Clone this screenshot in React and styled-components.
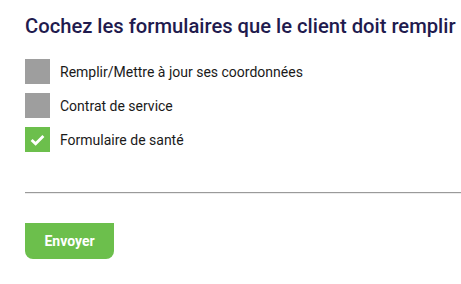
import React, { useState } from 'react';
import styled, { createGlobalStyle } from 'styled-components';

const Global = createGlobalStyle`
  body {
    margin: 0;
    background: #ffffff;
    font-family: Roboto, "Liberation Sans", sans-serif;
  }
`;

const Page = styled.div`
  padding: 14px 0 0 25px;
`;

const Title = styled.h2`
  margin: 0 0 21px 0;
  font-size: 20.2px;
  font-weight: 500;
  color: #1f1b4e;
  line-height: 24px;
`;

const List = styled.div`
  display: flex;
  flex-direction: column;
  gap: 9px;
`;

const Row = styled.label`
  display: flex;
  align-items: center;
  gap: 10px;
  cursor: pointer;
  font-size: 14px;
  color: #1a1a1a;
`;

const Box = styled.span`
  width: 25px;
  height: 25px;
  display: flex;
  align-items: center;
  justify-content: center;
  background: ${p => (p.checked ? '#6cbf4c' : '#9e9e9e')};
`;

const Divider = styled.hr`
  margin: 40px 0 0 0;
  border: 0;
  border-top: 1px solid #9a9a9a;
  border-bottom: 1px solid #ececec;
`;

const Button = styled.button`
  margin-top: 29px;
  width: 89px;
  height: 36px;
  border: 0;
  border-radius: 0 0 8px 8px;
  background: #6cbf4c;
  color: #ffffff;
  font-family: Roboto, "Liberation Sans", sans-serif;
  font-size: 14px;
  font-weight: 700;
  cursor: pointer;
`;

const Check = () => (
  <svg width="15" height="12" viewBox="0 0 15 12">
    <path d="M1.6 6 L5.6 9.8 L13.4 2" fill="none" stroke="#fff" strokeWidth="2.8" />
  </svg>
);

const forms = [
  'Remplir/Mettre à jour ses coordonnées',
  'Contrat de service',
  'Formulaire de santé',
];

export default function App() {
  const [checked, setChecked] = useState([false, false, true]);
  const toggle = i => setChecked(c => c.map((v, j) => (j === i ? !v : v)));

  return (
    <Page>
      <Global />
      <Title>Cochez les formulaires que le client doit remplir</Title>
      <List>
        {forms.map((f, i) => (
          <Row key={f} onClick={() => toggle(i)}>
            <Box checked={checked[i]}>{checked[i] && <Check />}</Box>
            {f}
          </Row>
        ))}
      </List>
      <Divider />
      <Button>Envoyer</Button>
    </Page>
  );
}
